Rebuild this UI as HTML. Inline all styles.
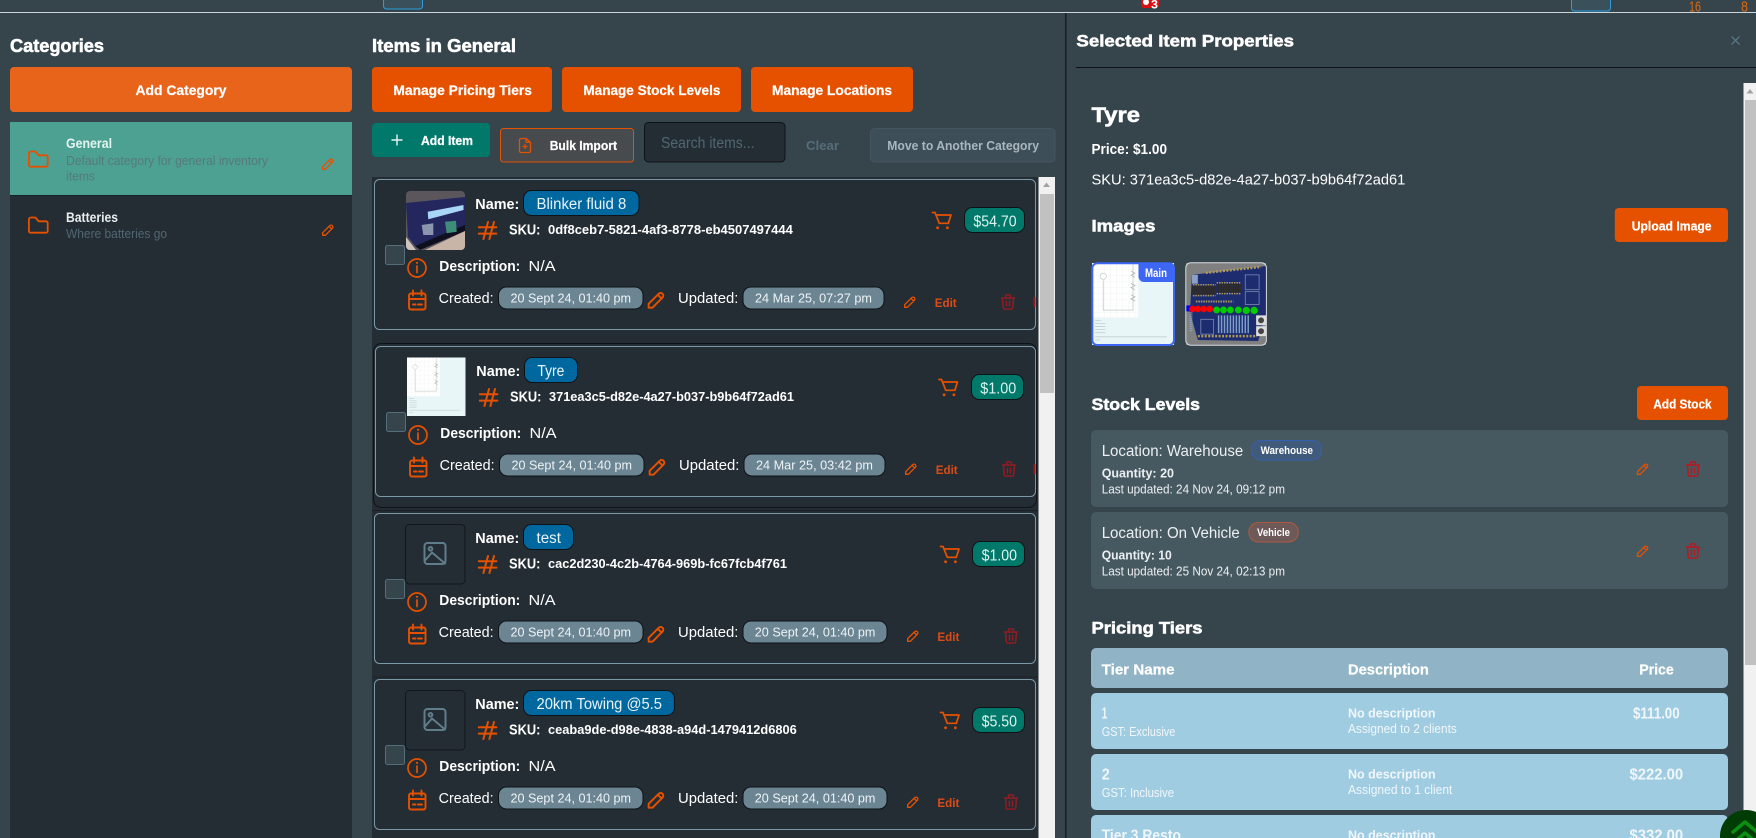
<!DOCTYPE html>
<html lang="en">
<head>
<meta charset="utf-8">
<title>Inventory</title>
<style>
html,body{margin:0;padding:0;background:#36444c;width:1756px;height:838px;overflow:hidden}
svg{display:block}
text{font-family:"Liberation Sans",Arial,sans-serif;fill:#fff}
.b{font-weight:700}
.h{font-weight:700;stroke:#fff;stroke-width:.55px}
.s{font-weight:700;stroke:#fff;stroke-width:.22px}
.o{fill:none;stroke:#e65100;stroke-linecap:round;stroke-linejoin:round}
.r{fill:none;stroke:#8e1c22;stroke-linecap:round;stroke-linejoin:round}
</style>
</head>
<body>
<svg xmlns="http://www.w3.org/2000/svg" width="1756" height="838" viewBox="0 0 1756 838">
<defs>
<symbol id="pencil" viewBox="0 0 24 24"><path d="M4 20h4l10.500-10.500a2.828 2.828 0 1 0-4-4L4 16v4M13.500 6.500l4 4"/></symbol>
<symbol id="trash" viewBox="0 0 24 24"><path d="M4 7h16M10 11v6M14 11v6M5 7l1 12a2 2 0 0 0 2 2h8a2 2 0 0 0 2-2l1-12M9 7V4a1 1 0 0 1 1-1h4a1 1 0 0 1 1 1v3"/></symbol>
<g id="cart"><path class="o" stroke-width="1.700" d="M932.500 212.500h2.500l4.300 10.800h9l2.700-8.300h-14.500"/><circle cx="937.600" cy="227.800" r="1.400" fill="#e65100"/><circle cx="947.400" cy="227.800" r="1.400" fill="#e65100"/></g>
<g id="hash"><path class="o" stroke-width="2" d="M478.800 227.300h17.600M478.800 233.600h17.600M488 222l-4.600 17M494 222l-4.600 17"/></g>
<g id="info"><circle class="o" stroke-width="1.700" cx="417" cy="268" r="9"/><path class="o" stroke-width="1.700" d="M417 266v6.500"/><circle cx="417" cy="262.800" r="1.100" fill="#e65100"/></g>
<g id="cal"><path class="o" stroke-width="1.900" d="M411 293.500h12.500a2 2 0 0 1 2 2v12a2 2 0 0 1-2 2H411a2 2 0 0 1-2-2v-12a2 2 0 0 1 2-2zM413 290.500v5M421.500 290.500v5M409 299h16.500M413 304.500h2.500M418 304.500h4"/></g>
<g id="ph"><rect x="405.500" y="190.500" width="59.500" height="59.500" rx="4" fill="#252d34" stroke="#10171b"/><g fill="none" stroke="#607d8b" stroke-width="2" stroke-linecap="round" stroke-linejoin="round"><rect x="424.500" y="209" width="21" height="21" rx="3"/><circle cx="430.500" cy="214.800" r="1.800"/><path d="M424.500 227l7.500-8.500 13 11"/></g></g>
<symbol id="schem" viewBox="0 0 80 80" preserveAspectRatio="none">
<rect width="80" height="80" fill="#e8f6f7"/>
<rect width="45" height="53" fill="#fff"/>
<path d="M0 6h45M0 12h45M0 18h45M0 24h45M0 30h45M0 36h45M0 42h45M0 48h45M6 0v53M12 0v53M18 0v53M24 0v53M30 0v53M36 0v53M42 0v53" stroke="#f1f3f3" stroke-width=".5"/>
<path d="M11 17v29h29V1" fill="none" stroke="#cfd4d4" stroke-width="1"/>
<circle cx="11" cy="13" r="3" fill="#fff" stroke="#c2c8c8" stroke-width=".7"/>
<path d="M38 8l4 2-4 2 4 2M38 20l4 2-4 2 4 2M38 31l4 2-4 2 4 2" fill="none" stroke="#aab1b1" stroke-width=".7"/>
<path d="M3 56h6M3 59h10M3 62h10M3 65h10M3 68h10M3 72h70M3 75h5" stroke="#c2cfd2" stroke-width=".8"/>
</symbol>
<symbol id="pcb" viewBox="0 0 81 83" preserveAspectRatio="none">
<rect width="81" height="83" fill="#808080"/>
<polygon points="6,12 81,3 81,52 73,79 12,78 4,50" fill="#1c2c6e"/>
<path d="M20 10l56-6M12 74h60" stroke="#b09a5a" stroke-width="2.500" stroke-dasharray="2 1.500" fill="none"/>
<rect x="6" y="12" width="6" height="9" fill="#8aa0c4"/>
<rect x="6" y="23" width="24" height="9" fill="#2c2c30"/><rect x="31" y="21" width="25" height="9" fill="#2c2c30"/>
<path d="M7 33h23M31 31h25M7 22h23M31 20h25" stroke="#b09a5a" stroke-width="1.500" stroke-dasharray="1.500 1"/>
<rect x="60" y="12" width="14" height="15" fill="none" stroke="#7a8ab5" stroke-width=".8"/><rect x="60" y="29" width="14" height="13" fill="none" stroke="#7a8ab5" stroke-width=".8"/>
<path d="M10 39h38" stroke="#b09a5a" stroke-width="2" stroke-dasharray="1.500 1"/>
<rect x="0" y="43" width="6" height="6" fill="#0000e0"/>
<g fill="#f00"><circle cx="6.500" cy="46.500" r="3.300"/><circle cx="12" cy="46.500" r="3.300"/><circle cx="18" cy="46.500" r="3.300"/><circle cx="24" cy="46.500" r="3.300"/></g>
<g fill="#0c0"><circle cx="31" cy="47.500" r="3.500"/><circle cx="38" cy="47.500" r="3.500"/><circle cx="45" cy="47.500" r="3.500"/><circle cx="53" cy="47.500" r="3.500"/><circle cx="61" cy="48" r="3.700"/><circle cx="69" cy="48" r="3.700"/></g>
<path d="M33 53v18M36 53v18M39 53v18M42 53v18M45 53v18M48 53v18M51 53v18M54 53v18M57 53v18M60 53v18M63 53v18" stroke="#7d9ec8" stroke-width="1.500"/>
<rect x="15" y="57" width="13" height="15" fill="none" stroke="#7a8ab5" stroke-width=".8"/>
<path d="M5 50v20" stroke="#8aa0c4" stroke-width="3" stroke-dasharray="1 1"/>
<rect x="71" y="53" width="10" height="10" fill="#ddd"/><circle cx="76" cy="58" r="3" fill="#444"/><rect x="71" y="64" width="10" height="10" fill="#ddd"/><circle cx="76" cy="69" r="3" fill="#444"/>
</symbol>
<clipPath id="c1"><rect x="406" y="191" width="59" height="59" rx="4"/></clipPath>
</defs>

<!-- background and top bar -->
<rect width="1756" height="838" fill="#36444c"/>
<rect x="383.500" y="-6" width="39" height="15" rx="3" fill="#3a505b" stroke="#2a9fe0"/>
<rect x="1571.500" y="-6" width="39" height="17" rx="3" fill="#3a505b" stroke="#2a9fe0"/>
<rect x="1141" y="-5" width="18" height="13" rx="3" fill="#d80f14"/>
<circle cx="1146" cy="2" r="3" fill="#fff"/>
<text x="1151" y="8.500" font-size="12" class="b" textLength="7" lengthAdjust="spacingAndGlyphs">3</text>
<text x="1689" y="11.500" font-size="15" style="fill:#dd6a10" textLength="12" lengthAdjust="spacingAndGlyphs">16</text>
<text x="1741" y="11.500" font-size="15" style="fill:#dd6a10" textLength="7" lengthAdjust="spacingAndGlyphs">8</text>
<rect x="0" y="12" width="1756" height="1" fill="#cdd6da"/>

<!-- Categories -->
<text x="10" y="52" font-size="18" class="h" textLength="94" lengthAdjust="spacingAndGlyphs">Categories</text>
<rect x="10" y="67" width="342" height="45" rx="4" fill="#e8641b"/>
<text x="135.500" y="95" font-size="14" class="s" textLength="91" lengthAdjust="spacingAndGlyphs">Add Category</text>
<rect x="10" y="195" width="342" height="643" fill="#252d34"/>
<rect x="10" y="122" width="342" height="73" fill="#4da193"/>
<rect x="10" y="195" width="342" height="1" fill="#1a2126"/>
<path class="o" stroke-width="1.800" d="M28.900 153.500a2 2 0 0 1 2-2h4.500l3.200 3.800h7.500a1.600 1.600 0 0 1 1.600 1.600v8.300a1.500 1.500 0 0 1-1.500 1.500H30.400a1.500 1.500 0 0 1-1.500-1.500z"/>
<text x="66" y="148" font-size="13.500" class="b" style="fill:#e4f4f1" textLength="46" lengthAdjust="spacingAndGlyphs">General</text>
<text x="66" y="165" font-size="13" style="fill:#56797a" textLength="202" lengthAdjust="spacingAndGlyphs">Default category for general inventory</text>
<text x="66" y="180.500" font-size="13" style="fill:#56797a" textLength="29" lengthAdjust="spacingAndGlyphs">items</text>
<use href="#pencil" class="o" x="320" y="156" width="16" height="16" stroke-width="2"/>
<path class="o" stroke-width="1.800" d="M28.900 219.500a2 2 0 0 1 2-2h4.500l3.200 3.800h7.500a1.600 1.600 0 0 1 1.600 1.600v8.300a1.500 1.500 0 0 1-1.500 1.500H30.400a1.500 1.500 0 0 1-1.500-1.500z"/>
<text x="66" y="222" font-size="13.500" class="b" style="fill:#e8eef0" textLength="52" lengthAdjust="spacingAndGlyphs">Batteries</text>
<text x="66" y="238" font-size="13" style="fill:#4f6772" textLength="101" lengthAdjust="spacingAndGlyphs">Where batteries go</text>
<use href="#pencil" class="o" x="320" y="222" width="16" height="16" stroke-width="2"/>

<!-- Items header -->
<text x="372" y="52" font-size="18" class="h" textLength="144" lengthAdjust="spacingAndGlyphs">Items in General</text>
<rect x="372" y="67" width="180" height="45" rx="4" fill="#e65100"/>
<text x="393.400" y="95" font-size="14" class="s" textLength="138.600" lengthAdjust="spacingAndGlyphs">Manage Pricing Tiers</text>
<rect x="562" y="67" width="179" height="45" rx="4" fill="#e65100"/>
<text x="583.400" y="95" font-size="14" class="s" textLength="137" lengthAdjust="spacingAndGlyphs">Manage Stock Levels</text>
<rect x="751" y="67" width="162" height="45" rx="4" fill="#e65100"/>
<text x="772" y="95" font-size="14" class="s" textLength="120" lengthAdjust="spacingAndGlyphs">Manage Locations</text>

<rect x="372" y="123" width="118" height="34" rx="4" fill="#00796b"/>
<path d="M391.500 140h11M397 134.500v11" stroke="#e8f5f3" stroke-width="1.400" fill="none"/>
<text x="421" y="145" font-size="13" class="s" textLength="52" lengthAdjust="spacingAndGlyphs">Add Item</text>
<rect x="500.500" y="128.500" width="133" height="33.500" rx="3" fill="#474b4d" stroke="#e65100"/>
<path class="o" stroke-width="1.300" d="M526 138.500v3a.8.800 0 0 0 .8.800h3M528.500 152.500h-7.500a1.500 1.500 0 0 1-1.500-1.500v-11a1.500 1.500 0 0 1 1.500-1.500h5l4.500 4v8.500a1.500 1.500 0 0 1-1.500 1.500zM525 144.500v4M523 146.500h4"/>
<text x="549.700" y="150" font-size="13" class="s" textLength="67.300" lengthAdjust="spacingAndGlyphs">Bulk Import</text>
<rect x="644.500" y="122.500" width="140.500" height="39.500" rx="4" fill="#252d34" stroke="#0d1317"/>
<text x="661" y="148" font-size="15.500" style="fill:#4f6772" textLength="93.500" lengthAdjust="spacingAndGlyphs">Search items...</text>
<text x="806" y="150" font-size="13" class="b" style="fill:#546e7a" textLength="33" lengthAdjust="spacingAndGlyphs">Clear</text>
<rect x="870.500" y="128.500" width="184.500" height="33.500" rx="4" fill="#3e4e58" stroke="#44555f"/>
<text x="887.300" y="150" font-size="13" class="b" style="fill:#a8b7be" textLength="151.700" lengthAdjust="spacingAndGlyphs">Move to Another Category</text>

<!-- list panel -->
<rect x="372" y="177" width="666.500" height="661" fill="#252d34"/>
<rect x="1038.500" y="177" width="16.500" height="661" fill="#f1f1f1"/>
<rect x="1040" y="194" width="14" height="199" fill="#c1c1c1"/>
<path d="M1046.500 182.500l3.500 4.500h-7z" fill="#a3a3a3"/>
<rect x="372" y="510" width="666" height="1" fill="#1a2126"/>
<rect x="372" y="676.500" width="666" height="1" fill="#1a2126"/>
<rect x="373.500" y="343.500" width="663" height="164" rx="8" fill="none" stroke="#0d1317"/>

<!-- card 1 -->
<g>
<rect x="374.500" y="179.500" width="661" height="150" rx="5" fill="none" stroke="#7c99a8"/>
<g clip-path="url(#c1)">
<rect x="406" y="191" width="59" height="59" fill="#5a565c"/>
<polygon points="406,203 465,197 465,227 415,246 408,237" fill="#23275e"/>
<polygon points="415,246 465,225 465,231 420,250" fill="#0e1020"/>
<polygon points="427.700,211.700 463.500,205 463.500,210 428.300,219.300" fill="#a9d6f7"/>
<polygon points="421.700,225 433.300,223.300 433.300,235 423.300,235" fill="#8b95ae"/>
<polygon points="445,221.700 456,220.700 456.700,231.700 446.700,233.300" fill="#3e8d79"/>
<polygon points="425,250 465,231 465,250" fill="#c9b4a8"/>
<polygon points="406,237 416,250 406,250" fill="#cfc4bc"/>
</g>
<rect x="385.500" y="245.500" width="19" height="19" rx="2" fill="#36444c" stroke="#546e7a"/>
<text x="475.300" y="209" font-size="15" class="b" textLength="44" lengthAdjust="spacingAndGlyphs">Name:</text>
<rect x="523.500" y="190.500" width="115.500" height="25" rx="8" fill="#01689f" stroke="#0d1317"/>
<text x="536.500" y="209" font-size="15.500" style="fill:#e8f4fa" textLength="89.800" lengthAdjust="spacingAndGlyphs">Blinker fluid 8</text>
<use href="#hash"/>
<text x="509" y="234.300" font-size="15" class="b" textLength="31.400" lengthAdjust="spacingAndGlyphs">SKU:</text>
<text x="548" y="234" font-size="13" class="b" textLength="244.800" lengthAdjust="spacingAndGlyphs">0df8ceb7-5821-4af3-8778-eb4507497444</text>
<use href="#info"/>
<text x="439.300" y="271" font-size="15" class="b" textLength="81" lengthAdjust="spacingAndGlyphs">Description:</text>
<text x="528.500" y="271" font-size="15" textLength="27" lengthAdjust="spacingAndGlyphs">N/A</text>
<use href="#cal"/>
<text x="438.600" y="303" font-size="15" textLength="55" lengthAdjust="spacingAndGlyphs">Created:</text>
<rect x="498.500" y="287" width="144.500" height="22" rx="8" fill="#6b8593" stroke="#0d1317"/>
<text x="510.500" y="302.500" font-size="13" style="fill:#eef3f5" textLength="120.500" lengthAdjust="spacingAndGlyphs">20 Sept 24, 01:40 pm</text>
<use href="#pencil" class="o" x="644.800" y="288.500" width="23" height="23" stroke-width="2"/>
<text x="678" y="303" font-size="15" textLength="60.400" lengthAdjust="spacingAndGlyphs">Updated:</text>
<rect x="743" y="287" width="141" height="22" rx="8" fill="#6b8593" stroke="#0d1317"/>
<text x="755" y="302.500" font-size="13" style="fill:#eef3f5" textLength="117" lengthAdjust="spacingAndGlyphs">24 Mar 25, 07:27 pm</text>
<use href="#pencil" class="o" x="902" y="294" width="16" height="16" stroke-width="2"/>
<text x="934.700" y="307" font-size="12" class="b" style="fill:#dd4b15" textLength="22" lengthAdjust="spacingAndGlyphs">Edit</text>
<use href="#trash" class="r" x="998.500" y="292.500" width="19" height="19" stroke-width="2"/>
<rect x="1033.500" y="297" width="2" height="10" fill="#8e1c22"/>
<use href="#cart"/>
<rect x="964.500" y="207.500" width="60" height="25" rx="8" fill="#00796b" stroke="#0d1317"/>
<text x="973.400" y="226.500" font-size="16" style="fill:#dcf3ef" textLength="43.200" lengthAdjust="spacingAndGlyphs">$54.70</text>
</g>

<!-- card 2 (selected) -->
<g transform="translate(1 167)">
<rect x="374.500" y="179.500" width="660" height="150" rx="5" fill="none" stroke="#7c99a8"/>
<use href="#schem" x="406" y="190.500" width="58.500" height="58.500"/>
<rect x="385.500" y="245.500" width="19" height="19" rx="2" fill="#36444c" stroke="#546e7a"/>
<text x="475.300" y="209" font-size="15" class="b" textLength="44" lengthAdjust="spacingAndGlyphs">Name:</text>
<rect x="523.500" y="190.500" width="53" height="25" rx="8" fill="#01689f" stroke="#0d1317"/>
<text x="536.400" y="209" font-size="15.500" style="fill:#e8f4fa" textLength="27" lengthAdjust="spacingAndGlyphs">Tyre</text>
<use href="#hash"/>
<text x="509" y="234.300" font-size="15" class="b" textLength="31.400" lengthAdjust="spacingAndGlyphs">SKU:</text>
<text x="548" y="234" font-size="13" class="b" textLength="245" lengthAdjust="spacingAndGlyphs">371ea3c5-d82e-4a27-b037-b9b64f72ad61</text>
<use href="#info"/>
<text x="439.300" y="271" font-size="15" class="b" textLength="81" lengthAdjust="spacingAndGlyphs">Description:</text>
<text x="528.500" y="271" font-size="15" textLength="27" lengthAdjust="spacingAndGlyphs">N/A</text>
<use href="#cal"/>
<text x="438.600" y="303" font-size="15" textLength="55" lengthAdjust="spacingAndGlyphs">Created:</text>
<rect x="498.500" y="287" width="144.500" height="22" rx="8" fill="#6b8593" stroke="#0d1317"/>
<text x="510.500" y="302.500" font-size="13" style="fill:#eef3f5" textLength="120.500" lengthAdjust="spacingAndGlyphs">20 Sept 24, 01:40 pm</text>
<use href="#pencil" class="o" x="644.800" y="288.500" width="23" height="23" stroke-width="2"/>
<text x="678" y="303" font-size="15" textLength="60.400" lengthAdjust="spacingAndGlyphs">Updated:</text>
<rect x="743" y="287" width="141" height="22" rx="8" fill="#6b8593" stroke="#0d1317"/>
<text x="755" y="302.500" font-size="13" style="fill:#eef3f5" textLength="117" lengthAdjust="spacingAndGlyphs">24 Mar 25, 03:42 pm</text>
<use href="#pencil" class="o" x="902" y="294" width="16" height="16" stroke-width="2"/>
<text x="934.700" y="307" font-size="12" class="b" style="fill:#dd4b15" textLength="22" lengthAdjust="spacingAndGlyphs">Edit</text>
<use href="#trash" class="r" x="998.500" y="292.500" width="19" height="19" stroke-width="2"/>
<rect x="1032.500" y="297" width="2" height="10" fill="#8e1c22"/>
<use href="#cart" x="5.500"/>
<rect x="970.500" y="207.500" width="52" height="25" rx="8" fill="#00796b" stroke="#0d1317"/>
<text x="979.300" y="226.300" font-size="16" style="fill:#dcf3ef" textLength="36" lengthAdjust="spacingAndGlyphs">$1.00</text>
</g>

<!-- card 3 -->
<g transform="translate(0 334)">
<rect x="374.500" y="179.500" width="661" height="150" rx="5" fill="none" stroke="#7c99a8"/>
<use href="#ph"/>
<rect x="385.500" y="245.500" width="19" height="19" rx="2" fill="#36444c" stroke="#546e7a"/>
<text x="475.300" y="209" font-size="15" class="b" textLength="44" lengthAdjust="spacingAndGlyphs">Name:</text>
<rect x="523.500" y="190.500" width="50" height="25" rx="8" fill="#01689f" stroke="#0d1317"/>
<text x="536.500" y="209" font-size="15.500" style="fill:#e8f4fa" textLength="24.500" lengthAdjust="spacingAndGlyphs">test</text>
<use href="#hash"/>
<text x="509" y="234.300" font-size="15" class="b" textLength="31.400" lengthAdjust="spacingAndGlyphs">SKU:</text>
<text x="548" y="234" font-size="13" class="b" textLength="239" lengthAdjust="spacingAndGlyphs">cac2d230-4c2b-4764-969b-fc67fcb4f761</text>
<use href="#info"/>
<text x="439.300" y="271" font-size="15" class="b" textLength="81" lengthAdjust="spacingAndGlyphs">Description:</text>
<text x="528.500" y="271" font-size="15" textLength="27" lengthAdjust="spacingAndGlyphs">N/A</text>
<use href="#cal"/>
<text x="438.600" y="303" font-size="15" textLength="55" lengthAdjust="spacingAndGlyphs">Created:</text>
<rect x="498.500" y="287" width="144.500" height="22" rx="8" fill="#6b8593" stroke="#0d1317"/>
<text x="510.500" y="302.500" font-size="13" style="fill:#eef3f5" textLength="120.500" lengthAdjust="spacingAndGlyphs">20 Sept 24, 01:40 pm</text>
<use href="#pencil" class="o" x="644.800" y="288.500" width="23" height="23" stroke-width="2"/>
<text x="678" y="303" font-size="15" textLength="60.400" lengthAdjust="spacingAndGlyphs">Updated:</text>
<rect x="743" y="287" width="144" height="22" rx="8" fill="#6b8593" stroke="#0d1317"/>
<text x="754.800" y="302.500" font-size="13" style="fill:#eef3f5" textLength="120.600" lengthAdjust="spacingAndGlyphs">20 Sept 24, 01:40 pm</text>
<use href="#pencil" class="o" x="905" y="294" width="16" height="16" stroke-width="2"/>
<text x="937.400" y="307" font-size="12" class="b" style="fill:#dd4b15" textLength="22" lengthAdjust="spacingAndGlyphs">Edit</text>
<use href="#trash" class="r" x="1001.500" y="292.500" width="19" height="19" stroke-width="2"/>
<use href="#cart" x="8"/>
<rect x="972.500" y="207.500" width="52" height="25" rx="8" fill="#00796b" stroke="#0d1317"/>
<text x="981.600" y="226.300" font-size="16" style="fill:#dcf3ef" textLength="35.400" lengthAdjust="spacingAndGlyphs">$1.00</text>
</g>

<!-- card 4 -->
<g transform="translate(0 500)">
<rect x="374.500" y="179.500" width="661" height="150" rx="5" fill="none" stroke="#7c99a8"/>
<use href="#ph"/>
<rect x="385.500" y="245.500" width="19" height="19" rx="2" fill="#36444c" stroke="#546e7a"/>
<text x="475.300" y="209" font-size="15" class="b" textLength="44" lengthAdjust="spacingAndGlyphs">Name:</text>
<rect x="523.500" y="190.500" width="151" height="25" rx="8" fill="#01689f" stroke="#0d1317"/>
<text x="536.500" y="209" font-size="15.500" style="fill:#e8f4fa" textLength="125.500" lengthAdjust="spacingAndGlyphs">20km Towing @5.5</text>
<use href="#hash"/>
<text x="509" y="234.300" font-size="15" class="b" textLength="31.400" lengthAdjust="spacingAndGlyphs">SKU:</text>
<text x="548" y="234" font-size="13" class="b" textLength="248.800" lengthAdjust="spacingAndGlyphs">ceaba9de-d98e-4838-a94d-1479412d6806</text>
<use href="#info"/>
<text x="439.300" y="271" font-size="15" class="b" textLength="81" lengthAdjust="spacingAndGlyphs">Description:</text>
<text x="528.500" y="271" font-size="15" textLength="27" lengthAdjust="spacingAndGlyphs">N/A</text>
<use href="#cal"/>
<text x="438.600" y="303" font-size="15" textLength="55" lengthAdjust="spacingAndGlyphs">Created:</text>
<rect x="498.500" y="287" width="144.500" height="22" rx="8" fill="#6b8593" stroke="#0d1317"/>
<text x="510.500" y="302.500" font-size="13" style="fill:#eef3f5" textLength="120.500" lengthAdjust="spacingAndGlyphs">20 Sept 24, 01:40 pm</text>
<use href="#pencil" class="o" x="644.800" y="288.500" width="23" height="23" stroke-width="2"/>
<text x="678" y="303" font-size="15" textLength="60.400" lengthAdjust="spacingAndGlyphs">Updated:</text>
<rect x="743" y="287" width="144" height="22" rx="8" fill="#6b8593" stroke="#0d1317"/>
<text x="754.800" y="302.500" font-size="13" style="fill:#eef3f5" textLength="120.600" lengthAdjust="spacingAndGlyphs">20 Sept 24, 01:40 pm</text>
<use href="#pencil" class="o" x="905" y="294" width="16" height="16" stroke-width="2"/>
<text x="937.400" y="307" font-size="12" class="b" style="fill:#dd4b15" textLength="22" lengthAdjust="spacingAndGlyphs">Edit</text>
<use href="#trash" class="r" x="1001.500" y="292.500" width="19" height="19" stroke-width="2"/>
<use href="#cart" x="8"/>
<rect x="972.500" y="207.500" width="52" height="25" rx="8" fill="#00796b" stroke="#0d1317"/>
<text x="981.600" y="226.300" font-size="16" style="fill:#dcf3ef" textLength="35.400" lengthAdjust="spacingAndGlyphs">$5.50</text>
</g>

<!-- right panel -->
<rect x="1065" y="13" width="1.500" height="825" fill="#161e22"/>
<text x="1076.400" y="46.700" font-size="17" class="h" textLength="217.600" lengthAdjust="spacingAndGlyphs">Selected Item Properties</text>
<path d="M1731.500 36.500l8 8M1739.500 36.500l-8 8" stroke="#607d8b" stroke-width="1.200" fill="none"/>
<rect x="1076" y="67" width="680" height="1" fill="#0d1317"/>
<rect x="1743.500" y="83" width="12.500" height="755" fill="#f1f1f1"/>
<rect x="1745" y="100" width="11" height="565" fill="#c1c1c1"/>
<path d="M1750 89l3.500 4.500h-7z" fill="#a3a3a3"/>

<text x="1091.500" y="122" font-size="21" class="h" textLength="48.500" lengthAdjust="spacingAndGlyphs">Tyre</text>
<text x="1091.500" y="154" font-size="14.500" class="b" textLength="75.500" lengthAdjust="spacingAndGlyphs">Price: $1.00</text>
<text x="1091.500" y="184.300" font-size="15" textLength="313.800" lengthAdjust="spacingAndGlyphs">SKU: 371ea3c5-d82e-4a27-b037-b9b64f72ad61</text>
<text x="1091.500" y="231.700" font-size="17" class="h" textLength="63.900" lengthAdjust="spacingAndGlyphs">Images</text>
<rect x="1614.800" y="208" width="113.200" height="34" rx="4" fill="#e65100"/>
<text x="1631.700" y="230.300" font-size="13" class="s" textLength="79.900" lengthAdjust="spacingAndGlyphs">Upload Image</text>

<use href="#schem" x="1092" y="263" width="82" height="82"/>
<path d="M1138.500 263H1170a3 3 0 0 1 3 3v16h-29a5.500 5.500 0 0 1-5.500-5.500z" fill="#3d66f5"/>
<rect x="1092.300" y="263.300" width="81.700" height="81.700" rx="5" fill="none" stroke="#3d66f5" stroke-width="2"/>
<text x="1145" y="277" font-size="12" class="b" textLength="22" lengthAdjust="spacingAndGlyphs">Main</text>
<use href="#pcb" x="1186" y="263" width="80" height="82"/>
<rect x="1185.800" y="262.800" width="80.600" height="82.400" rx="5" fill="none" stroke="#d8dcdd"/>

<text x="1091.500" y="410" font-size="17" class="h" textLength="108.500" lengthAdjust="spacingAndGlyphs">Stock Levels</text>
<rect x="1637" y="386" width="91" height="34" rx="4" fill="#e65100"/>
<text x="1653.400" y="408.300" font-size="13" class="s" textLength="58.200" lengthAdjust="spacingAndGlyphs">Add Stock</text>

<rect x="1091" y="430" width="637" height="77" rx="5" fill="#465961"/>
<text x="1101.700" y="456" font-size="15.500" style="fill:#eceff1" textLength="141.600" lengthAdjust="spacingAndGlyphs">Location: Warehouse</text>
<rect x="1251.500" y="440.500" width="70" height="19.500" rx="9.700" fill="#3f5a7a" stroke="#3560b0"/>
<text x="1260.600" y="454" font-size="11" class="b" textLength="52.400" lengthAdjust="spacingAndGlyphs">Warehouse</text>
<text x="1101.700" y="477.700" font-size="13" class="b" style="fill:#eceff1" textLength="72.300" lengthAdjust="spacingAndGlyphs">Quantity: 20</text>
<text x="1101.700" y="493.700" font-size="12.500" style="fill:#eceff1" textLength="183.300" lengthAdjust="spacingAndGlyphs">Last updated: 24 Nov 24, 09:12 pm</text>
<use href="#pencil" class="o" x="1634.800" y="461" width="16" height="16" stroke-width="2"/>
<use href="#trash" style="fill:none;stroke:#b01c22;stroke-linecap:round;stroke-linejoin:round" x="1683.500" y="459.500" width="19" height="19" stroke-width="2"/>

<rect x="1091" y="512" width="637" height="77" rx="5" fill="#465961"/>
<text x="1101.700" y="538" font-size="15.500" style="fill:#eceff1" textLength="138.100" lengthAdjust="spacingAndGlyphs">Location: On Vehicle</text>
<rect x="1248.800" y="522.500" width="49.500" height="19.500" rx="9.700" fill="#6d5a58" stroke="#b0583f"/>
<text x="1257" y="536" font-size="11" class="b" textLength="33" lengthAdjust="spacingAndGlyphs">Vehicle</text>
<text x="1101.700" y="559.700" font-size="13" class="b" style="fill:#eceff1" textLength="70.100" lengthAdjust="spacingAndGlyphs">Quantity: 10</text>
<text x="1101.700" y="575.700" font-size="12.500" style="fill:#eceff1" textLength="183.300" lengthAdjust="spacingAndGlyphs">Last updated: 25 Nov 24, 02:13 pm</text>
<use href="#pencil" class="o" x="1634.800" y="543" width="16" height="16" stroke-width="2"/>
<use href="#trash" style="fill:none;stroke:#b01c22;stroke-linecap:round;stroke-linejoin:round" x="1683.500" y="541.500" width="19" height="19" stroke-width="2"/>

<text x="1091.500" y="633.300" font-size="17" class="h" textLength="111" lengthAdjust="spacingAndGlyphs">Pricing Tiers</text>
<rect x="1091" y="648" width="637" height="40" rx="5" fill="#90b4c6"/>
<text x="1101.700" y="674.300" font-size="14.500" class="s" textLength="72.800" lengthAdjust="spacingAndGlyphs">Tier Name</text>
<text x="1348" y="674.300" font-size="14.500" class="s" textLength="80.900" lengthAdjust="spacingAndGlyphs">Description</text>
<text x="1639.200" y="674.300" font-size="14.500" class="s" textLength="34.600" lengthAdjust="spacingAndGlyphs">Price</text>

<rect x="1091" y="693" width="637" height="56" rx="5" fill="#a0cce2"/>
<text x="1101.700" y="718.700" font-size="16" class="b" style="fill:#f0f7fb" textLength="5.500" lengthAdjust="spacingAndGlyphs">1</text>
<text x="1101.700" y="736" font-size="12.500" style="fill:#f0f7fb" textLength="73.700" lengthAdjust="spacingAndGlyphs">GST: Exclusive</text>
<text x="1348" y="717.300" font-size="13" class="b" style="fill:#f0f7fb" textLength="87.500" lengthAdjust="spacingAndGlyphs">No description</text>
<text x="1348" y="733" font-size="12.500" style="fill:#f0f7fb" textLength="108.800" lengthAdjust="spacingAndGlyphs">Assigned to 2 clients</text>
<text x="1633" y="718.700" font-size="16" class="b" style="fill:#f0f7fb" textLength="46.600" lengthAdjust="spacingAndGlyphs">$111.00</text>

<rect x="1091" y="754" width="637" height="56" rx="5" fill="#a0cce2"/>
<text x="1101.700" y="779.700" font-size="16" class="b" style="fill:#f0f7fb" textLength="8" lengthAdjust="spacingAndGlyphs">2</text>
<text x="1101.700" y="797" font-size="12.500" style="fill:#f0f7fb" textLength="72.300" lengthAdjust="spacingAndGlyphs">GST: Inclusive</text>
<text x="1348" y="778.300" font-size="13" class="b" style="fill:#f0f7fb" textLength="87.500" lengthAdjust="spacingAndGlyphs">No description</text>
<text x="1348" y="794" font-size="12.500" style="fill:#f0f7fb" textLength="104.400" lengthAdjust="spacingAndGlyphs">Assigned to 1 client</text>
<text x="1629.500" y="779.700" font-size="16" class="b" style="fill:#f0f7fb" textLength="53.700" lengthAdjust="spacingAndGlyphs">$222.00</text>

<rect x="1091" y="815" width="637" height="40" rx="5" fill="#a0cce2"/>
<text x="1101.700" y="840.700" font-size="16" class="b" style="fill:#f0f7fb" textLength="79.300" lengthAdjust="spacingAndGlyphs">Tier 3 Resto</text>
<text x="1348" y="839.300" font-size="13" class="b" style="fill:#f0f7fb" textLength="87.500" lengthAdjust="spacingAndGlyphs">No description</text>
<text x="1629.500" y="840.700" font-size="16" class="b" style="fill:#f0f7fb" textLength="53.700" lengthAdjust="spacingAndGlyphs">$332.00</text>

<!-- scroll-to-top button -->
<circle cx="1746" cy="836" r="26" fill="#003c06"/>
<path d="M1733 832l12-10 12 10M1733 843l12-10 12 10" fill="none" stroke="#0a8f12" stroke-width="3.500" stroke-linecap="round" stroke-linejoin="round"/>
</svg>
</body>
</html>
